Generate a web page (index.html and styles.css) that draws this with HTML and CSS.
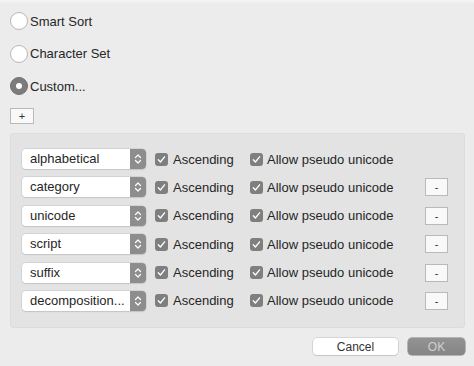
FILE: index.html
```html
<!DOCTYPE html>
<html>
<head>
<meta charset="utf-8">
<link rel="stylesheet" href="styles.css">
</head>
<body>
<div class="page">
  <div class="radios">
    <label class="radio-row"><span class="radio"></span><span>Smart Sort</span></label>
    <label class="radio-row"><span class="radio"></span><span>Character Set</span></label>
    <label class="radio-row"><span class="radio on"></span><span>Custom...</span></label>
  </div>
  <div class="plus-row"><span class="btn-small plus">+</span></div>
  <div class="group">
    <div class="row">
      <div class="popup"><span class="popup-label">alphabetical</span><span class="stepper"><svg width="8" height="12" viewBox="0 0 8 12"><path d="M1.5 4.5 L4 2 L6.5 4.5 M1.5 7.5 L4 10 L6.5 7.5" fill="none" stroke="#fff" stroke-width="1.2" stroke-linecap="round" stroke-linejoin="round"/></svg></span></div>
      <div class="check col1"><span class="box"><svg width="13" height="13" viewBox="0 0 13 13"><path d="M3.3 6.8 L5.4 9 L9.6 3.8" fill="none" stroke="#fff" stroke-width="1.3" stroke-linecap="round" stroke-linejoin="round"/></svg></span><span>Ascending</span></div>
      <div class="check col2"><span class="box"><svg width="13" height="13" viewBox="0 0 13 13"><path d="M3.3 6.8 L5.4 9 L9.6 3.8" fill="none" stroke="#fff" stroke-width="1.3" stroke-linecap="round" stroke-linejoin="round"/></svg></span><span>Allow pseudo unicode</span></div>
      <div class="minus-slot"></div>
    </div>
    <div class="row">
      <div class="popup"><span class="popup-label">category</span><span class="stepper"><svg width="8" height="12" viewBox="0 0 8 12"><path d="M1.5 4.5 L4 2 L6.5 4.5 M1.5 7.5 L4 10 L6.5 7.5" fill="none" stroke="#fff" stroke-width="1.2" stroke-linecap="round" stroke-linejoin="round"/></svg></span></div>
      <div class="check col1"><span class="box"><svg width="13" height="13" viewBox="0 0 13 13"><path d="M3.3 6.8 L5.4 9 L9.6 3.8" fill="none" stroke="#fff" stroke-width="1.3" stroke-linecap="round" stroke-linejoin="round"/></svg></span><span>Ascending</span></div>
      <div class="check col2"><span class="box"><svg width="13" height="13" viewBox="0 0 13 13"><path d="M3.3 6.8 L5.4 9 L9.6 3.8" fill="none" stroke="#fff" stroke-width="1.3" stroke-linecap="round" stroke-linejoin="round"/></svg></span><span>Allow pseudo unicode</span></div>
      <div class="minus-slot"><span class="btn-small minus">-</span></div>
    </div>
    <div class="row">
      <div class="popup"><span class="popup-label">unicode</span><span class="stepper"><svg width="8" height="12" viewBox="0 0 8 12"><path d="M1.5 4.5 L4 2 L6.5 4.5 M1.5 7.5 L4 10 L6.5 7.5" fill="none" stroke="#fff" stroke-width="1.2" stroke-linecap="round" stroke-linejoin="round"/></svg></span></div>
      <div class="check col1"><span class="box"><svg width="13" height="13" viewBox="0 0 13 13"><path d="M3.3 6.8 L5.4 9 L9.6 3.8" fill="none" stroke="#fff" stroke-width="1.3" stroke-linecap="round" stroke-linejoin="round"/></svg></span><span>Ascending</span></div>
      <div class="check col2"><span class="box"><svg width="13" height="13" viewBox="0 0 13 13"><path d="M3.3 6.8 L5.4 9 L9.6 3.8" fill="none" stroke="#fff" stroke-width="1.3" stroke-linecap="round" stroke-linejoin="round"/></svg></span><span>Allow pseudo unicode</span></div>
      <div class="minus-slot"><span class="btn-small minus">-</span></div>
    </div>
    <div class="row">
      <div class="popup"><span class="popup-label">script</span><span class="stepper"><svg width="8" height="12" viewBox="0 0 8 12"><path d="M1.5 4.5 L4 2 L6.5 4.5 M1.5 7.5 L4 10 L6.5 7.5" fill="none" stroke="#fff" stroke-width="1.2" stroke-linecap="round" stroke-linejoin="round"/></svg></span></div>
      <div class="check col1"><span class="box"><svg width="13" height="13" viewBox="0 0 13 13"><path d="M3.3 6.8 L5.4 9 L9.6 3.8" fill="none" stroke="#fff" stroke-width="1.3" stroke-linecap="round" stroke-linejoin="round"/></svg></span><span>Ascending</span></div>
      <div class="check col2"><span class="box"><svg width="13" height="13" viewBox="0 0 13 13"><path d="M3.3 6.8 L5.4 9 L9.6 3.8" fill="none" stroke="#fff" stroke-width="1.3" stroke-linecap="round" stroke-linejoin="round"/></svg></span><span>Allow pseudo unicode</span></div>
      <div class="minus-slot"><span class="btn-small minus">-</span></div>
    </div>
    <div class="row">
      <div class="popup"><span class="popup-label">suffix</span><span class="stepper"><svg width="8" height="12" viewBox="0 0 8 12"><path d="M1.5 4.5 L4 2 L6.5 4.5 M1.5 7.5 L4 10 L6.5 7.5" fill="none" stroke="#fff" stroke-width="1.2" stroke-linecap="round" stroke-linejoin="round"/></svg></span></div>
      <div class="check col1"><span class="box"><svg width="13" height="13" viewBox="0 0 13 13"><path d="M3.3 6.8 L5.4 9 L9.6 3.8" fill="none" stroke="#fff" stroke-width="1.3" stroke-linecap="round" stroke-linejoin="round"/></svg></span><span>Ascending</span></div>
      <div class="check col2"><span class="box"><svg width="13" height="13" viewBox="0 0 13 13"><path d="M3.3 6.8 L5.4 9 L9.6 3.8" fill="none" stroke="#fff" stroke-width="1.3" stroke-linecap="round" stroke-linejoin="round"/></svg></span><span>Allow pseudo unicode</span></div>
      <div class="minus-slot"><span class="btn-small minus">-</span></div>
    </div>
    <div class="row">
      <div class="popup"><span class="popup-label">decomposition...</span><span class="stepper"><svg width="8" height="12" viewBox="0 0 8 12"><path d="M1.5 4.5 L4 2 L6.5 4.5 M1.5 7.5 L4 10 L6.5 7.5" fill="none" stroke="#fff" stroke-width="1.2" stroke-linecap="round" stroke-linejoin="round"/></svg></span></div>
      <div class="check col1"><span class="box"><svg width="13" height="13" viewBox="0 0 13 13"><path d="M3.3 6.8 L5.4 9 L9.6 3.8" fill="none" stroke="#fff" stroke-width="1.3" stroke-linecap="round" stroke-linejoin="round"/></svg></span><span>Ascending</span></div>
      <div class="check col2"><span class="box"><svg width="13" height="13" viewBox="0 0 13 13"><path d="M3.3 6.8 L5.4 9 L9.6 3.8" fill="none" stroke="#fff" stroke-width="1.3" stroke-linecap="round" stroke-linejoin="round"/></svg></span><span>Allow pseudo unicode</span></div>
      <div class="minus-slot"><span class="btn-small minus">-</span></div>
    </div>
  </div>
  <div class="actions">
    <span class="btn cancel">Cancel</span>
    <span class="btn ok">OK</span>
  </div>
</div>
</body>
</html>
```
FILE: styles.css
```css
html, body {
  margin: 0;
  padding: 0;
}
body {
  width: 474px;
  height: 366px;
  overflow: hidden;
  background: linear-gradient(#f6f6f6 0px, #ececec 4px, #ececec 100%);
  font-family: "Liberation Sans", Arial, sans-serif;
  font-size: 13px;
  color: #262626;
}
.page {
  display: flex;
  flex-direction: column;
  padding: 5px 9px 0 10px;
}
.radios {
  display: flex;
  flex-direction: column;
}
.radio-row {
  height: 32.5px;
  display: flex;
  align-items: center;
  gap: 2px;
}
.radio {
  width: 16px;
  height: 16px;
  border-radius: 50%;
  background: #fff;
  border: 1px solid #b8b8b8;
  box-sizing: content-box;
  display: flex;
  align-items: center;
  justify-content: center;
}
.radio.on {
  background: #7c7c7c;
  border-color: #6f6f6f;
}
.radio.on::after {
  content: "";
  width: 6px;
  height: 6px;
  border-radius: 50%;
  background: #fff;
}
.plus-row {
  display: flex;
  margin-top: 5.5px;
}
.btn-small {
  display: flex;
  align-items: center;
  justify-content: center;
  background: #f9f9f9;
  border: 1px solid #b9b9b9;
  box-sizing: border-box;
  font-size: 11px;
  color: #333;
}
.plus {
  width: 24px;
  height: 16px;
  padding-bottom: 1px;
}
.group {
  margin-top: 9px;
  background: #e3e3e3;
  border: 1px solid #dcdcdc;
  border-radius: 3px;
  box-sizing: border-box;
  height: 195px;
  padding: 15px 16px 0 11px;
  display: flex;
  flex-direction: column;
}
.row {
  height: 28.4px;
  display: flex;
  align-items: flex-start;
}
.popup {
  width: 124px;
  height: 20px;
  display: flex;
  background: #fff;
  border-radius: 4px;
  box-shadow: 0 0 0 0.5px #c4c4c4, 0 1px 1px rgba(0,0,0,0.12);
  overflow: hidden;
}
.popup-label {
  flex: 1;
  padding-left: 8px;
  line-height: 20px;
  white-space: nowrap;
  overflow: hidden;
}
.stepper {
  width: 16px;
  background: #8d8d8d;
  display: flex;
  align-items: center;
  justify-content: center;
}
.check {
  display: flex;
  align-items: center;
  height: 20px;
  gap: 5px;
  white-space: nowrap;
}
.col1 {
  margin-left: 9px;
  width: 95px;
}
.col2 {
  width: 175px;
  gap: 4px;
}
.box {
  width: 13px;
  height: 13px;
  border-radius: 3px;
  background: #7f7f7f;
  display: flex;
}
.minus-slot {
  display: flex;
  padding-top: 1px;
}
.minus {
  width: 23px;
  height: 18px;
}
.actions {
  display: flex;
  justify-content: flex-end;
  gap: 10px;
  margin-top: 10px;
}
.btn {
  height: 17px;
  display: flex;
  align-items: center;
  justify-content: center;
  border-radius: 4px;
  font-size: 12px;
  box-sizing: border-box;
}
.cancel {
  width: 85px;
  background: #fff;
  box-shadow: 0 0 0 0.5px #bdbdbd, 0 1px 1px rgba(0,0,0,0.12);
  color: #333;
}
.ok {
  width: 57px;
  background: linear-gradient(#939393, #858585);
  color: #cfcfcf;
  box-shadow: 0 0 0 0.5px #7a7a7a;
}
```
